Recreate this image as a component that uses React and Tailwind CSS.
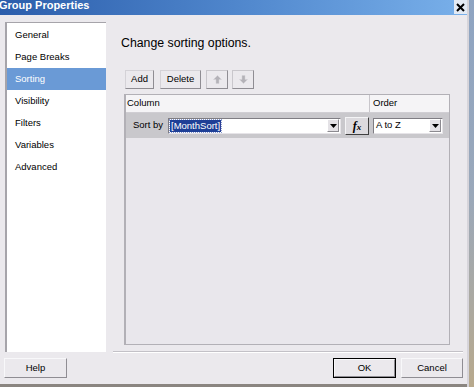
import React from 'react';

const navItems = ['General', 'Page Breaks', 'Sorting', 'Visibility', 'Filters', 'Variables', 'Advanced'];

function DropArrow() {
  return (
    <div className="w-[12px] h-[13px] bg-[#e4e2e6] border border-t-white border-l-white border-r-[#8c8a90] border-b-[#8c8a90] flex items-center justify-center">
      <svg width="7" height="4" viewBox="0 0 7 4">
        <path d="M0 0h7L3.5 4z" fill="#000" />
      </svg>
    </div>
  );
}

function ArrowBtn({ down }) {
  return (
    <div className="w-[22px] h-[19px] bg-[#ebe9ed] border border-[#c9c7cc] border-b-[#8f8d93] border-r-[#8f8d93] flex items-center justify-center">
      <svg width="9" height="9" viewBox="0 0 9 9" style={{ transform: down ? 'rotate(180deg)' : 'none' }}>
        <path d="M4.5 0.5L8.5 4.5H6V8.5H3V4.5H0.5z" fill="#b4b2b8" stroke="#d2d0d6" strokeWidth="0.5" />
      </svg>
    </div>
  );
}

function Btn({ children, className = '' }) {
  return (
    <div className={`h-[19px] bg-[#ebe9ed] border border-[#d4d2d7] border-b-[#8f8d93] border-r-[#8f8d93] flex items-center justify-center text-[9.5px] ${className}`}>
      {children}
    </div>
  );
}

export default function App() {
  return (
    <div className="w-[474px] h-[387px] flex overflow-hidden bg-[#ebe9ed] font-['Liberation_Sans',Arial,sans-serif] text-black">
      <div className="w-[467px] flex flex-col">
        {/* title bar */}
        <div className="h-[15px] flex items-center bg-gradient-to-r from-[#2b5dab] via-[#4f86cc] to-[#79b0ea] relative">
          <span className="text-white font-bold text-[11px] leading-none -mt-[4px] -ml-[1px]">Group Properties</span>
          <div className="absolute right-0 top-0 w-[13px] h-[14px] bg-[#e3eaf4] flex items-center justify-center">
            <svg width="9" height="9" viewBox="0 0 9 9">
              <path d="M1 1L8 8M8 1L1 8" stroke="#000" strokeWidth="2" />
            </svg>
          </div>
        </div>

        <div className="flex h-[337px] pt-[7px]">
          {/* nav list */}
          <div className="ml-[5px] w-[101px] h-[330px] bg-white border-l-2 border-t border-[#a6a4aa] pt-[1px]">
            {navItems.map(item => (
              <div
                key={item}
                className={`h-[22px] flex items-center pl-[8px] text-[9.5px] ${item === 'Sorting' ? 'bg-[#6a9ad6] text-white' : ''}`}
              >
                {item}
              </div>
            ))}
          </div>

          {/* right content */}
          <div className="ml-[7px] w-[350px] h-[330px] border-b border-[#c3c1c7] shadow-[0_1px_0_#ffffff] flex flex-col">
            <div className="mt-[14px] ml-[8px] h-[14px] flex items-center text-[12.3px]">Change sorting options.</div>

            <div className="mt-[20px] ml-[12px] flex gap-[5px]">
              <Btn className="w-[29px]">Add</Btn>
              <Btn className="w-[41px] ml-[1px]">Delete</Btn>
              <ArrowBtn />
              <div className="-ml-[1px]"><ArrowBtn down /></div>
            </div>

            {/* grid */}
            <div className="mt-[5px] ml-[11px] w-[326px] h-[251px] border-l-2 border-t border-r border-b border-[#b2b0b6] bg-[#e9e7ec] flex flex-col">
              <div className="h-[18px] flex bg-[#f5f4f6] border-b border-[#d0ced3] text-[9.5px]">
                <div className="w-[244px] flex items-center pl-[1px] border-r border-[#c8c6cb]">Column</div>
                <div className="flex-1 flex items-center pl-[3px]">Order</div>
              </div>
              <div className="h-[25px] bg-[#c9c8cc] flex items-center text-[9.5px]">
                <span className="ml-[7px] w-[35px]">Sort by</span>
                <div className="w-[173px] h-[16px] bg-white border border-[#7f7d83] border-b-[#e6e4e8] border-r-[#e6e4e8] flex items-center justify-between pr-[1px]">
                  <span className="ml-[1px] px-[1px] bg-[#1e3f96] text-white leading-[12px] outline-1 outline-dotted outline-[#8899cc]">[MonthSort]</span>
                  <DropArrow />
                </div>
                <div className="ml-[4px] w-[24px] h-[18px] bg-[#dcdade] border border-[#f4f4f6] border-r-[#404040] border-b-[#404040] flex items-center justify-center">
                  <span className="font-['Liberation_Serif',serif] italic font-bold text-[12px] leading-none">f<span className="text-[9px]">x</span></span>
                </div>
                <div className="ml-[4px] w-[70px] h-[16px] bg-white border border-[#7f7d83] border-b-[#e6e4e8] border-r-[#e6e4e8] flex items-center justify-between pr-[1px]">
                  <span className="ml-[2px]">A to Z</span>
                  <DropArrow />
                </div>
              </div>
            </div>
          </div>
        </div>

        {/* footer buttons */}
        <div className="h-[32px] flex items-start pt-[6px]">
          <Btn className="ml-[4px] w-[63px] h-[20px] border-[#f8f8fa] border-b-[#8f8d93] border-r-[#8f8d93] text-[9.5px]">Help</Btn>
          <div className="ml-auto flex gap-[5px] mr-[4px]">
            <div className="w-[63px] h-[20px] border border-black bg-[#ebe9ed] flex items-center justify-center text-[9.5px]">
              <div className="w-[61px] h-[18px] border border-[#f8f8fa] border-b-[#8f8d93] border-r-[#8f8d93] flex items-center justify-center">OK</div>
            </div>
            <Btn className="w-[62px] h-[20px] border-[#f8f8fa] border-b-[#8f8d93] border-r-[#8f8d93]">Cancel</Btn>
          </div>
        </div>

        <div className="h-[3px] bg-[#8a8580]" />
      </div>

      {/* window edge */}
      <div className="w-[7px] flex">
        <div className="w-[2px] bg-[#d6d4da]" />
        <div className="flex-1 bg-gradient-to-b from-[#8ea4c2] via-[#9aa8ba] to-[#b8a98c]" />
      </div>
    </div>
  );
}
